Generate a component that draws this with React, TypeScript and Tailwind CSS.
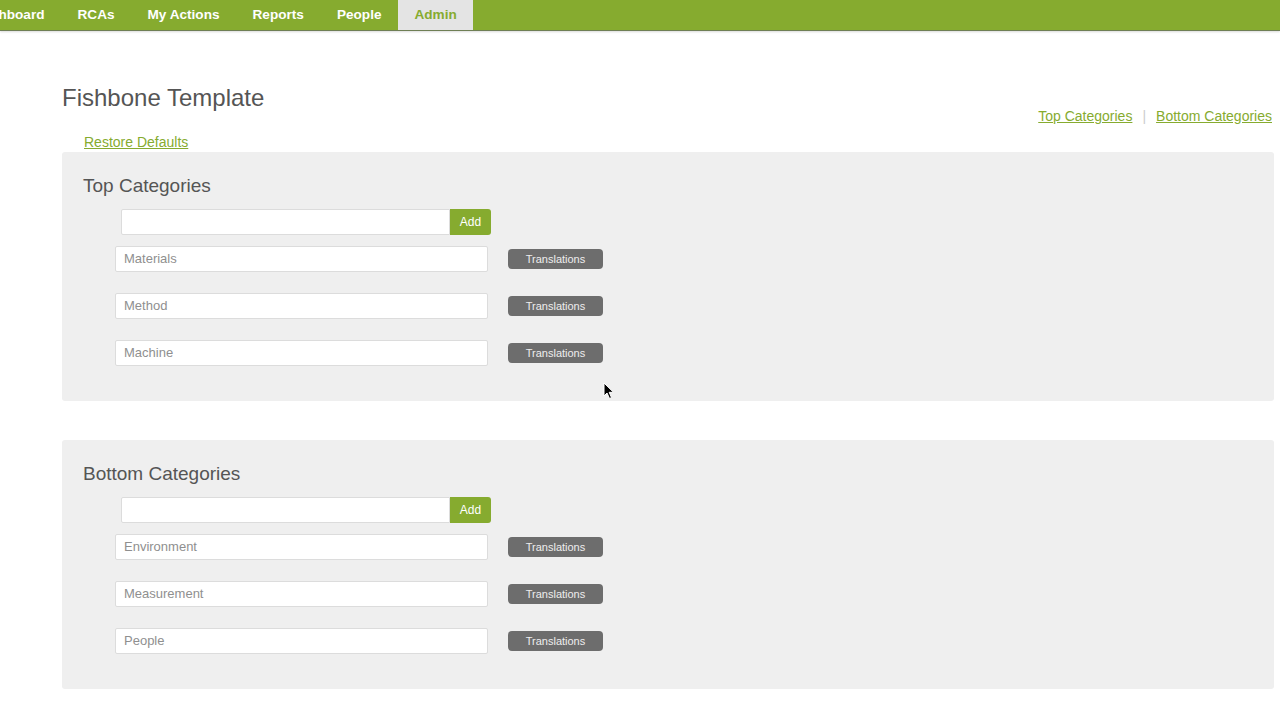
const navItems = ["Dashboard", "RCAs", "My Actions", "Reports", "People", "Admin"];

const topCategories = ["Materials", "Method", "Machine"];
const bottomCategories = ["Environment", "Measurement", "People"];

function NavBar() {
  return (
    <nav className="h-[31px] border-b border-[#6f7f55] bg-[#86ab2f] shadow-[0_1px_2px_rgba(0,0,0,0.15)]">
      <ul className="-ml-[43px] flex h-[30px] items-stretch">
        {navItems.map((item) => (
          <li
            key={item}
            className={
              item === "Admin"
                ? "flex items-center bg-[#e4e4e4] px-[16.5px] text-[13.6px] font-bold text-[#86ab2f]"
                : "flex items-center px-[16.5px] text-[13.6px] font-bold text-white"
            }
          >
            {item}
          </li>
        ))}
      </ul>
    </nav>
  );
}

type CategoryPanelProps = {
  title: string;
  items: string[];
};

function CategoryPanel({ title, items }: CategoryPanelProps) {
  return (
    <section className="rounded-[3px] bg-[#efefef] pb-[35px] pl-[21px] pt-[22px]">
      <h2 className="h-[24px] text-[19px] leading-[24px] text-[#555555]">
        {title}
      </h2>
      <div className="ml-[38px] mt-[11px] flex h-[26px]">
        <input
          className="h-[26px] w-[329px] rounded-l-[2px] border border-[#dcdcdc] bg-white px-2 text-[13px] outline-none"
          type="text"
        />
        <button className="h-[26px] w-[41px] rounded-r-[3px] bg-[#86ab2f] text-[12px] text-white">
          Add
        </button>
      </div>
      <ul className="ml-[32px] mt-[11px] flex flex-col gap-[21px]">
        {items.map((item) => (
          <li key={item} className="flex h-[26px] items-center">
            <div className="flex h-[26px] w-[373px] items-center rounded-[2px] border border-[#dcdcdc] bg-white px-[8px] text-[13px] text-[#8f8f8f]">
              {item}
            </div>
            <button className="ml-[20px] h-[20px] w-[95px] rounded-[4px] bg-[#6d6d6d] text-[11px] text-[#eeeeee]">
              Translations
            </button>
          </li>
        ))}
      </ul>
    </section>
  );
}

function Cursor() {
  return (
    <svg
      className="pointer-events-none absolute left-[603px] top-[382px]"
      width="12"
      height="18"
      viewBox="0 0 12 18"
    >
      <path
        d="M1 1 L1 14 L4 11 L6.5 16.5 L8.5 15.6 L6.2 10.3 L10.5 10.3 Z"
        fill="#000"
        stroke="#fff"
        strokeWidth="1"
        strokeLinejoin="round"
      />
    </svg>
  );
}

export default function App() {
  return (
    <div
      className="relative h-[720px] w-[1280px] overflow-hidden bg-white"
      style={{ fontFamily: '"Liberation Sans", Arial, sans-serif' }}
    >
      <NavBar />
      <main className="pl-[62px] pr-[6px] pt-[53px]">
        <header className="flex items-start justify-between">
          <div>
            <h1 className="h-[28px] text-[24px] leading-[28px] text-[#555555]">
              Fishbone Template
            </h1>
            <a
              href="#"
              className="ml-[22px] mt-[22px] block h-[16px] text-[14px] leading-[16px] text-[#86ab2f] underline"
            >
              Restore Defaults
            </a>
          </div>
          <div className="mr-[2px] mt-[24px] flex items-center text-[14px] leading-[16px] text-[#86ab2f]">
            <a href="#" className="underline">
              Top Categories
            </a>
            <span className="mx-[10px] text-[#cccccc]">|</span>
            <a href="#" className="underline">
              Bottom Categories
            </a>
          </div>
        </header>
        <div className="mt-[2px] flex flex-col gap-[39px]">
          <CategoryPanel title="Top Categories" items={topCategories} />
          <CategoryPanel title="Bottom Categories" items={bottomCategories} />
        </div>
      </main>
      <Cursor />
    </div>
  );
}
